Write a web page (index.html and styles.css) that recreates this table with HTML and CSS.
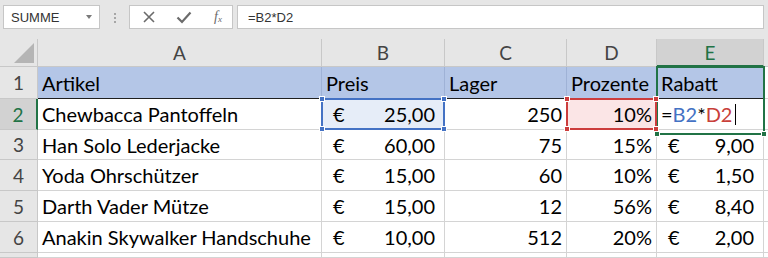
FILE: index.html
```html
<!DOCTYPE html>
<html lang="de">
<head>
    <meta charset="UTF-8">
    <title>Artikel - Rabatt</title>
    <link rel="stylesheet" href="styles.css">
</head>
<body>
    <div class="formula-bar">
        <div class="name-box">
            <span>SUMME</span>
            <span class="drop"></span>
        </div>
        <div class="grip"></div>
        <div class="fx-box">
            <svg class="icon" width="14" height="14" viewBox="0 0 14 14">
                <path d="M2 2 L12 12 M12 2 L2 12" stroke="#6b6b6b" stroke-width="1.6" fill="none"/>
            </svg>
            <svg class="icon" width="16" height="14" viewBox="0 0 16 14">
                <path d="M1.5 7.5 L6 12 L14.5 2.5" stroke="#6b6b6b" stroke-width="2.2" fill="none"/>
            </svg>
            <span class="fx">f<sub>x</sub></span>
        </div>
        <div class="formula-input">=B2*D2</div>
    </div>

    <div class="sheet">
        <!-- column letters -->
        <div class="hd corner"><span class="tri"></span></div>
        <div class="hd">A</div>
        <div class="hd">B</div>
        <div class="hd">C</div>
        <div class="hd">D</div>
        <div class="hd active">E</div>
        <div class="hd blank"></div>

        <!-- row 1: table head -->
        <div class="rh">1</div>
        <div class="c th">Artikel</div>
        <div class="c th">Preis</div>
        <div class="c th">Lager</div>
        <div class="c th">Prozente</div>
        <div class="c th">Rabatt
            <div class="mark green"><i class="hdl bl"></i><i class="hdl br"></i></div>
        </div>
        <div class="c"></div>

        <!-- row 2 -->
        <div class="rh active">2</div>
        <div class="c">Chewbacca Pantoffeln</div>
        <div class="c money ref-blue"><span>€</span><span>25,00</span>
            <div class="mark blue"><i class="hdl tl"></i><i class="hdl tr"></i><i class="hdl bl"></i><i class="hdl br"></i></div>
        </div>
        <div class="c num">250</div>
        <div class="c num ref-red">10%
            <div class="mark red"><i class="hdl tl"></i><i class="hdl tr"></i><i class="hdl bl"></i><i class="hdl br"></i></div>
        </div>
        <div class="c edit">=<span class="b">B2</span>*<span class="r">D2</span><span class="caret"></span></div>
        <div class="c"></div>

        <!-- row 3 -->
        <div class="rh">3</div>
        <div class="c">Han Solo Lederjacke</div>
        <div class="c money"><span>€</span><span>60,00</span></div>
        <div class="c num">75</div>
        <div class="c num">15%</div>
        <div class="c money"><span>€</span><span>9,00</span></div>
        <div class="c"></div>

        <!-- row 4 -->
        <div class="rh">4</div>
        <div class="c">Yoda Ohrschützer</div>
        <div class="c money"><span>€</span><span>15,00</span></div>
        <div class="c num">60</div>
        <div class="c num">10%</div>
        <div class="c money"><span>€</span><span>1,50</span></div>
        <div class="c"></div>

        <!-- row 5 -->
        <div class="rh">5</div>
        <div class="c">Darth Vader Mütze</div>
        <div class="c money"><span>€</span><span>15,00</span></div>
        <div class="c num">12</div>
        <div class="c num">56%</div>
        <div class="c money"><span>€</span><span>8,40</span></div>
        <div class="c"></div>

        <!-- row 6 -->
        <div class="rh">6</div>
        <div class="c">Anakin Skywalker Handschuhe</div>
        <div class="c money"><span>€</span><span>10,00</span></div>
        <div class="c num">512</div>
        <div class="c num">20%</div>
        <div class="c money"><span>€</span><span>2,00</span></div>
        <div class="c"></div>

        <!-- row 7 -->
        <div class="rh"></div>
        <div class="c"></div>
        <div class="c"></div>
        <div class="c"></div>
        <div class="c"></div>
        <div class="c"></div>
        <div class="c"></div>
    </div>
</body>
</html>
```

FILE: styles.css
```css
body {
    margin: 0;
    padding: 0;
    width: 768px;
    height: 258px;
    overflow: hidden;
    background-color: #ffffff;
    font-family: Lato, "Liberation Sans", sans-serif;
    color: #000000;
}

/* ---------- formula bar ---------- */

.formula-bar {
    display: flex;
    align-items: flex-start;
    height: 39px;
    padding: 5px 4px 0 3px;
    box-sizing: border-box;
    background-color: #e6e6e6;
    font-family: "Liberation Sans", Arial, sans-serif;
    font-size: 13px;
    color: #333333;
}

.name-box {
    display: flex;
    align-items: center;
    justify-content: space-between;
    width: 97px;
    height: 24px;
    padding: 0 7px 0 7px;
    box-sizing: border-box;
    background-color: #ffffff;
    border: 1px solid #c6c6c6;
}

.name-box .drop {
    width: 0;
    height: 0;
    border-left: 3px solid transparent;
    border-right: 3px solid transparent;
    border-top: 4px solid #7a7a7a;
}

.grip {
    width: 2px;
    height: 11px;
    margin: 7px 13px 0 14px;
    background-image: radial-gradient(circle, #a6a6a6 0.9px, transparent 1px);
    background-size: 2px 4px;
}

.fx-box {
    display: flex;
    align-items: center;
    gap: 20px;
    width: 104px;
    height: 24px;
    padding-left: 12px;
    box-sizing: border-box;
    background-color: #ffffff;
    border: 1px solid #c6c6c6;
}

.fx-box .fx {
    font-family: "Liberation Serif", serif;
    font-style: italic;
    font-size: 14px;
    color: #6b6b6b;
    margin-left: 2px;
}

.fx-box .fx sub {
    font-size: 9px;
    vertical-align: -1px;
}

.formula-input {
    flex: 1;
    height: 24px;
    margin-left: 4px;
    padding-left: 10px;
    line-height: 23px;
    box-sizing: border-box;
    background-color: #ffffff;
    border: 1px solid #c6c6c6;
}

/* ---------- grid ---------- */

.sheet {
    display: grid;
    grid-template-columns: 38px 284px 123px 122px 90px 107px 1fr;
    grid-template-rows: 28px 32px 31px 30px 31px 31px 31px 1fr;
    height: 219px;
    font-size: 20px;
}

.sheet > div {
    position: relative;
    box-sizing: border-box;
    border-right: 1px solid #d4d4d4;
    border-bottom: 1px solid #d4d4d4;
    white-space: nowrap;
}

.hd {
    display: flex;
    align-items: center;
    justify-content: center;
    background-color: #e6e6e6;
    border-color: #c8c8c8 !important;
    color: #444444;
    font-size: 19px;
}

.hd.blank {
    border-right: none !important;
}

.hd.active {
    background-color: #d2d2d2;
    color: #217346;
    border-bottom: 2px solid #217346 !important;
}

.corner .tri {
    position: absolute;
    right: 3px;
    bottom: 3px;
    width: 0;
    height: 0;
    border-left: 20px solid transparent;
    border-bottom: 20px solid #b5b5b5;
}

.rh {
    display: flex;
    align-items: center;
    justify-content: center;
    background-color: #e6e6e6;
    border-color: #c8c8c8 !important;
    color: #444444;
    font-size: 19px;
}

.rh.active {
    background-color: #d2d2d2;
    color: #217346;
    border-right: 2px solid #217346 !important;
}

.c {
    display: flex;
    align-items: center;
    padding: 0 4px;
}

.c.th {
    background-color: #b4c6e7;
    border-right-color: #9fb2d6 !important;
    border-bottom: 1px solid #1f1f1f !important;
}

.c.num {
    justify-content: flex-end;
    padding-right: 4px;
}

.c.money {
    justify-content: space-between;
    padding: 0 9px 0 11px;
}

.c.edit .b {
    color: #4472c4;
}

.c.edit .r {
    color: #c8403a;
}

.c.edit .caret {
    width: 1px;
    height: 21px;
    margin-left: 3px;
    background-color: #000000;
}

.ref-blue {
    background-color: #e6edf8;
}

.ref-red {
    background-color: #fbe5e6;
}

/* reference outlines and their corner handles */

.mark {
    position: absolute;
    top: -1px;
    left: -1px;
    right: -1px;
    bottom: -1px;
    border: 2px solid;
    z-index: 2;
    pointer-events: none;
}

.mark.blue {
    border-color: #4472c4;
    color: #4472c4;
}

.mark.red {
    border-color: #cc3d3d;
    color: #cc3d3d;
}

.mark.green {
    right: -2px;
    bottom: auto;
    height: 65px;
    border-color: #217346;
    color: #217346;
}

.hdl {
    position: absolute;
    width: 6px;
    height: 6px;
    background-color: currentColor;
    border: 1px solid #ffffff;
    box-sizing: border-box;
}

.hdl.tl { top: -4px; left: -4px; }
.hdl.tr { top: -4px; right: -4px; }
.hdl.bl { bottom: -4px; left: -4px; }
.hdl.br { bottom: -4px; right: -4px; }
```
